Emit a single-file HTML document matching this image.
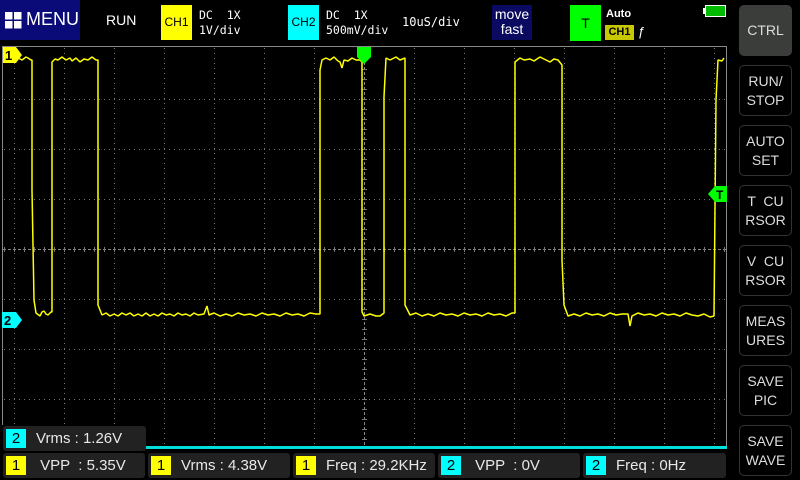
<!DOCTYPE html>
<html><head><meta charset="utf-8"><style>
*{margin:0;padding:0;box-sizing:border-box}
body{width:800px;height:480px;background:#000;position:relative;overflow:hidden;font-family:"Liberation Sans",sans-serif;color:#fff}
.a{position:absolute}
.mono{font-family:"DejaVu Sans Mono","Liberation Mono",monospace}
.btn{position:absolute;left:739px;width:53px;height:51px;border:1px solid #333;border-radius:5px;color:#ddd;font-size:14px;display:flex;align-items:center;justify-content:center;text-align:center;line-height:19px}
.m{position:absolute;height:25px;background:#222;border-radius:3px;font-size:15px;color:#e8e8e8;display:flex;align-items:center}
.m b{display:inline-block;width:20px;height:19px;margin-left:3px;margin-right:10px;color:#000;font-weight:normal;text-align:center;line-height:19px;font-size:15px}
.y{background:#ff0}.c{background:#0ff}
</style></head><body>
<div class="a" style="left:0;top:0;width:80px;height:40px;background:#0a0a78"></div>
<svg class="a" style="left:5px;top:12px" width="17" height="17"><rect x="0" y="0" width="7.5" height="7.5" fill="#fff"/><rect x="9" y="0" width="7.5" height="7.5" fill="#fff"/><rect x="0" y="9" width="7.5" height="7.5" fill="#fff"/><rect x="9" y="9" width="7.5" height="7.5" fill="#fff"/></svg>
<div class="a" style="left:26px;top:9px;font-size:18px">MENU</div>
<div class="a" style="left:106px;top:12px;font-size:14px">RUN</div>
<div class="a" style="left:161px;top:5px;width:31px;height:35px;background:#ff0;color:#000;font-size:12px;text-align:center;line-height:35px">CH1</div>
<div class="a mono" style="left:199px;top:8px;font-size:11.5px;line-height:15px">DC &nbsp;1X<br>1V/div</div>
<div class="a" style="left:288px;top:5px;width:31px;height:35px;background:#0ff;color:#000;font-size:12px;text-align:center;line-height:35px">CH2</div>
<div class="a mono" style="left:326px;top:8px;font-size:11.5px;line-height:15px">DC &nbsp;1X<br>500mV/div</div>
<div class="a mono" style="left:402px;top:15px;font-size:12px">10uS/div</div>
<div class="a" style="left:492px;top:5px;width:40px;height:35px;background:#0a0a60;font-size:14px;text-align:center;line-height:15px;padding-top:2px">move<br>fast</div>
<div class="a" style="left:570px;top:5px;width:31px;height:36px;background:#0f0;color:#000;font-size:14px;text-align:center;line-height:36px">T</div>
<div class="a" style="left:606px;top:8px;font-size:11px;font-weight:bold">Auto</div>
<div class="a" style="left:605px;top:25px;width:29px;height:15px;background:#c8c800;color:#000;font-size:11px;text-align:center;line-height:15px;font-weight:bold">CH1</div>
<div class="a" style="left:638px;top:24px;font-size:13px">ƒ</div>
<div class="a" style="left:703px;top:8px;width:3px;height:6px;background:#fff"></div>
<div class="a" style="left:705px;top:5px;width:21px;height:12px;border:1px solid #fff;background:#0b0"></div>

<svg class="a" style="left:0;top:0" width="730" height="452">
<g stroke="#777" stroke-width="1" stroke-dasharray="1 4">
<line x1="14.5" y1="48" x2="14.5" y2="448"/><line x1="64.5" y1="48" x2="64.5" y2="448"/><line x1="114.5" y1="48" x2="114.5" y2="448"/><line x1="164.5" y1="48" x2="164.5" y2="448"/><line x1="214.5" y1="48" x2="214.5" y2="448"/><line x1="264.5" y1="48" x2="264.5" y2="448"/><line x1="314.5" y1="48" x2="314.5" y2="448"/><line x1="414.5" y1="48" x2="414.5" y2="448"/><line x1="464.5" y1="48" x2="464.5" y2="448"/><line x1="514.5" y1="48" x2="514.5" y2="448"/><line x1="564.5" y1="48" x2="564.5" y2="448"/><line x1="614.5" y1="48" x2="614.5" y2="448"/><line x1="664.5" y1="48" x2="664.5" y2="448"/><line x1="714.5" y1="48" x2="714.5" y2="448"/>
<line x1="4" y1="99.5" x2="726" y2="99.5"/><line x1="4" y1="149.5" x2="726" y2="149.5"/><line x1="4" y1="199.5" x2="726" y2="199.5"/><line x1="4" y1="299.5" x2="726" y2="299.5"/><line x1="4" y1="349.5" x2="726" y2="349.5"/><line x1="4" y1="399.5" x2="726" y2="399.5"/>
</g>
<line x1="3" y1="249.5" x2="726" y2="249.5" stroke="#888" stroke-dasharray="3 2"/>
<line x1="3" y1="249.5" x2="726" y2="249.5" stroke="#777" stroke-width="5" stroke-dasharray="1 9" stroke-dashoffset="-1"/>
<line x1="364.5" y1="47" x2="364.5" y2="448" stroke="#888" stroke-dasharray="3 2"/>
<line x1="364.5" y1="47" x2="364.5" y2="448" stroke="#777" stroke-width="5" stroke-dasharray="1 9" stroke-dashoffset="-2"/>
<line x1="2" y1="46.5" x2="727" y2="46.5" stroke="#888"/>
<line x1="2.5" y1="46" x2="2.5" y2="425" stroke="#888"/>
<line x1="726.5" y1="46" x2="726.5" y2="448" stroke="#888"/>
<line x1="146" y1="447.5" x2="727" y2="447.5" stroke="#0dd" stroke-width="3"/>
<polyline fill="none" stroke="#ff0" stroke-width="1.5" stroke-linejoin="bevel" points="18,58 22,60 26,57 28,58 31,60 32,60 32,190 34,300 36,313 40,316 42,312 44,311 46,314 48,315 51,312 52,312 52,62 55,59 58,60 62,57 66,60 70,58 72,61 76,58 80,62 84,59 88,60 92,57 96,60 98,60 98,305 102,315 106,313 110,316 114,314 118,316 122,313 126,315 130,313 134,316 138,314 142,316 146,313 150,316 154,314 158,316 162,313 166,315 170,314 174,316 178,313 182,315 186,314 190,316 194,313 198,315 204,314 207,306 209,315 214,313 220,316 226,314 232,316 238,313 244,315 250,314 256,316 262,313 268,315 274,314 280,316 286,313 292,315 298,314 304,316 310,313 316,314 320,314 320,70 322,60 326,58 330,60 334,57 338,61 340,62 342,68 344,60 348,61 352,58 356,60 360,60 362,62 362,312 364,316 370,314 376,316 380,316 384,313 384,97 386,58 390,60 396,57 400,60 405,58 405,305 410,315 416,313 422,316 428,314 434,316 440,313 446,315 452,314 458,316 464,313 470,315 476,314 482,316 488,313 494,315 500,314 506,316 512,313 515,313 515,62 520,58 524,60 530,59 534,61 540,57 546,60 550,62 554,59 558,60 562,65 562,260 564,305 568,316 574,314 580,316 586,313 592,315 598,314 604,316 610,313 616,315 622,314 628,314 630,326 632,316 638,313 644,315 650,314 656,316 662,313 668,315 674,314 680,316 686,313 692,315 698,316 704,314 710,317 714,316 716,100 718,60 722,61 724,58"/>
<polygon points="3,47 16,47 22,55 16,63 3,63" fill="#ff0"/>
<text x="5" y="60" font-family="Liberation Sans" font-size="13" font-weight="bold" fill="#000">1</text>
<polygon points="2,312 16,312 22,320 16,328 2,328" fill="#0ff"/>
<text x="4" y="325" font-family="Liberation Sans" font-size="13" font-weight="bold" fill="#000">2</text>
<polygon points="357,47 371,47 371,57 364,64 357,57" fill="#0f0"/>
<polygon points="727,186 715,186 708,194 715,202 727,202" fill="#0f0"/>
<text x="716" y="199" font-family="Liberation Sans" font-size="12" font-weight="bold" fill="#000">T</text>
</svg>

<div class="btn" style="top:5px;background:#3a3d3a;border-color:#3a3d3a">CTRL</div>
<div class="btn" style="top:65px">RUN/<br>STOP</div>
<div class="btn" style="top:125px">AUTO<br>SET</div>
<div class="btn" style="top:185px">T &nbsp;CU<br>RSOR</div>
<div class="btn" style="top:245px">V &nbsp;CU<br>RSOR</div>
<div class="btn" style="top:305px">MEAS<br>URES</div>
<div class="btn" style="top:365px">SAVE<br>PIC</div>
<div class="btn" style="top:425px">SAVE<br>WAVE</div>

<div class="m" style="left:3px;top:426px;width:143px"><b class="c">2</b>Vrms : 1.26V</div>
<div class="m" style="left:3px;top:453px;width:142px"><b class="y">1</b>&nbsp;VPP &nbsp;: 5.35V</div>
<div class="m" style="left:148px;top:453px;width:142px"><b class="y">1</b>Vrms : 4.38V</div>
<div class="m" style="left:293px;top:453px;width:142px"><b class="y">1</b>Freq : 29.2KHz</div>
<div class="m" style="left:438px;top:453px;width:142px"><b class="c">2</b>&nbsp;VPP &nbsp;: 0V</div>
<div class="m" style="left:583px;top:453px;width:143px"><b class="c">2</b>Freq : 0Hz</div>
</body></html>
